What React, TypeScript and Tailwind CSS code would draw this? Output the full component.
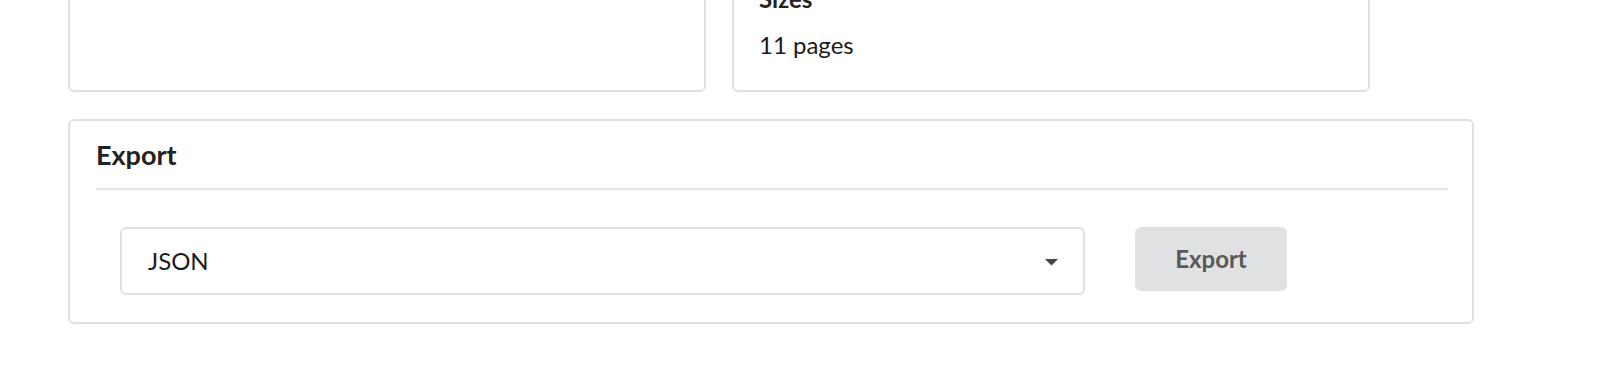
export default function App() {
  return (
    <div className="min-h-screen bg-white font-['Lato','Open_Sans',sans-serif] text-[#222]">
      <div className="pl-[68px]">
        <div className="flex gap-[26px] -mt-[60px]">
          <div className="w-[638px] h-[152px] rounded-md border-2 border-[#e0e0e0] bg-white" />
          <div className="w-[638px] h-[152px] rounded-md border-2 border-[#e0e0e0] bg-white px-[25px] pt-[42px]">
            <h3 className="text-[24px] font-bold leading-[29px]">Sizes</h3>
            <p className="mt-[17px] text-[24px] leading-[29px] text-[#1a1a1a]">11 pages</p>
          </div>
        </div>

        <div className="mt-[27px] w-[1406px] rounded-md border-2 border-[#e0e0e0] pl-[26px] pr-[24px] pt-[18px] pb-[27px]">
          <h2 className="text-[27px] font-bold leading-[32px] pb-[17px] border-b-2 border-[#e4e4e4]">Export</h2>
          <div className="mt-[37px] pl-[24px] flex items-start gap-[50px]">
            <div className="w-[965px] h-[68px] rounded-md border-2 border-[#e0e0e0] flex items-center justify-between pl-[26px] pr-[25px]">
              <span className="text-[24px] text-[#1a1a1a]">JSON</span>
              <svg width="13" height="7" viewBox="0 0 13 7" className="mt-[2px]">
                <path d="M0 0 L13 0 L6.5 6.5 Z" fill="#444" />
              </svg>
            </div>
            <button className="w-[152px] h-[64px] rounded-md bg-[#e0e1e3] text-[24px] font-bold text-[#595959]">
              Export
            </button>
          </div>
        </div>
      </div>
    </div>
  )
}
